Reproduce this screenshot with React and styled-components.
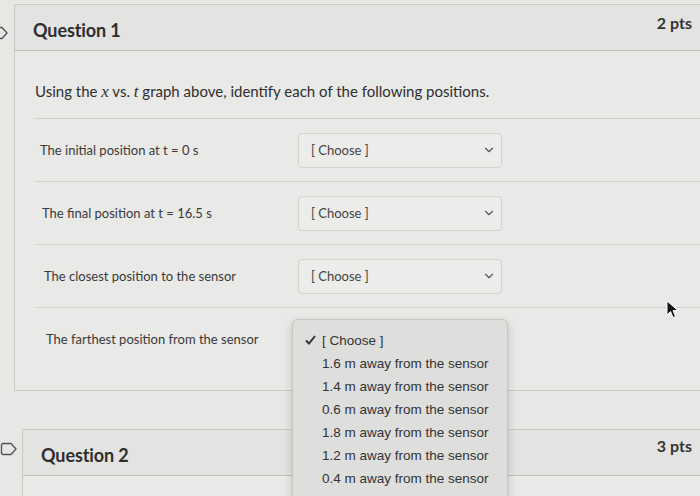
import React from "react";
import styled, { createGlobalStyle } from "styled-components";
import { ChevronDown } from "lucide-react";

const Global = createGlobalStyle`
  html, body {
    margin: 0;
    padding: 0;
    background: #e6e6e4;
  }
  body {
    font-family: Lato, "Open Sans", sans-serif;
    color: #333;
  }
`;

const Page = styled.div`
  position: relative;
  width: 700px;
  height: 496px;
  overflow: hidden;
  background: #e7e7e5;
  padding-top: 4px;
  box-sizing: border-box;
`;

const Card = styled.div`
  position: relative;
  margin-left: ${(p) => p.left}px;
  margin-right: -12px;
  margin-top: ${(p) => p.gap || 0}px;
  border: 1px solid #c9c9c6;
  background: #e9e9e7;
`;

const Header = styled.div`
  display: flex;
  justify-content: space-between;
  align-items: center;
  height: 45px;
  padding: 0 19px 0 18px;
  background: #e3e3e1;
  border-bottom: 1px solid #bfbfbc;
`;

const Title = styled.h2`
  margin: 0;
  padding-top: 5px;
  font-size: 18px;
  font-weight: 700;
  color: #2e2e2e;
  letter-spacing: -0.1px;
`;

const Pts = styled.span`
  align-self: flex-start;
  padding-top: ${(p) => p.top}px;
  font-size: 16px;
  font-weight: 700;
  color: #333;
`;

const Marker = styled.svg`
  position: absolute;
  left: ${(p) => p.left}px;
  top: ${(p) => p.top}px;
`;

const Body = styled.div`
  padding: 30px 0 0 20px;
`;

const Intro = styled.p`
  margin: 0;
  font-size: 15px;
  line-height: 20px;
  padding-bottom: 16px;
  border-bottom: 1px solid #cfcfcc;
  color: #2f2f2f;
`;

const Math = styled.i`
  font-family: "Liberation Serif", serif;
  font-size: 17px;
`;

const Row = styled.div`
  position: relative;
  display: flex;
  align-items: center;
  height: 62px;
  padding-left: ${(p) => p.indent}px;
  padding-bottom: ${(p) => (p.last ? 20 : 0)}px;
  border-bottom: ${(p) => (p.last ? "none" : "1px solid #d0d0cd")};
`;

const Label = styled.span`
  width: ${(p) => 263 - p.indent}px;
  font-size: 13px;
  color: #3a3a3a;
`;

const Select = styled.div`
  display: flex;
  align-items: center;
  justify-content: space-between;
  width: 204px;
  height: 35px;
  box-sizing: border-box;
  padding: 0 5px 0 12px;
  border: 1px solid #d2d2cf;
  border-radius: 4px;
  background: #ececea;
  font-size: 13px;
  color: #444;
  visibility: ${(p) => (p.covered ? "hidden" : "visible")};
  svg {
    color: #555;
  }
`;

const Menu = styled.ul`
  position: absolute;
  z-index: 5;
  left: 257px;
  top: 11px;
  width: 216px;
  height: 200px;
  margin: 0;
  padding: 9px 0 0;
  list-style: none;
  box-sizing: border-box;
  background: #dededc;
  border: 1px solid #c6c6c3;
  border-radius: 6px;
  box-shadow: 0 3px 10px rgba(0, 0, 0, 0.18);
  font-family: "Liberation Sans", Arial, sans-serif;
  font-size: 13.5px;
  color: #333;
`;

const Item = styled.li`
  display: flex;
  align-items: center;
  height: 23px;
  padding-left: 29px;
  position: relative;
  svg {
    position: absolute;
    left: 12px;
    top: 6px;
  }
`;

const Cursor = styled.svg`
  position: absolute;
  left: 666px;
  top: 300px;
  z-index: 10;
`;

const rows = [
  { label: "The initial position at t = 0 s", indent: 5 },
  { label: "The final position at t = 16.5 s", indent: 7 },
  { label: "The closest position to the sensor", indent: 9 },
  { label: "The farthest position from the sensor", indent: 11 },
];

const options = [
  "1.6 m away from the sensor",
  "1.4 m away from the sensor",
  "0.6 m away from the sensor",
  "1.8 m away from the sensor",
  "1.2 m away from the sensor",
  "0.4 m away from the sensor",
];

function TagMarker({ left, top }) {
  return (
    <Marker left={left} top={top} width="18" height="14" viewBox="0 0 18 14">
      <path
        d="M3 1.5 H11 L16 7 L11 12.5 H3 A1.5 1.5 0 0 1 1.5 11 V3 A1.5 1.5 0 0 1 3 1.5 Z"
        fill="none"
        stroke="#555"
        strokeWidth="1.4"
        strokeLinejoin="round"
      />
    </Marker>
  );
}

export default function App() {
  return (
    <Page>
      <Global />
      <Card left={14}>
        <TagMarker left={-24} top={21} />
        <Header>
          <Title>Question 1</Title>
          <Pts top={8}>2 pts</Pts>
        </Header>
        <Body>
          <Intro>
            Using the <Math>x</Math> vs. <Math>t</Math> graph above, identify
            each of the following positions.
          </Intro>
          {rows.map((r, i) => {
            const last = i === rows.length - 1;
            return (
              <Row key={r.label} indent={r.indent} last={last}>
                <Label indent={r.indent}>{r.label}</Label>
                <Select covered={last}>
                  <span>[ Choose ]</span>
                  <ChevronDown size={14} strokeWidth={2} />
                </Select>
                {last && (
                  <Menu>
                    <Item>
                      <svg width="11" height="10" viewBox="0 0 11 10">
                        <path
                          d="M1 5.5 L4 8.5 L10 1"
                          fill="none"
                          stroke="#333"
                          strokeWidth="2"
                        />
                      </svg>
                      [ Choose ]
                    </Item>
                    {options.map((o) => (
                      <Item key={o}>{o}</Item>
                    ))}
                  </Menu>
                )}
              </Row>
            );
          })}
        </Body>
      </Card>
      <Card left={22} gap={38}>
        <TagMarker left={-23} top={12} />
        <Header>
          <Title>Question 2</Title>
          <Pts top={6}>3 pts</Pts>
        </Header>
        <Body style={{ height: 40 }} />
      </Card>
      <Cursor width="13" height="19" viewBox="0 0 13 19">
        <path
          d="M1 1 L1 15 L4.5 11.5 L7 17.5 L9.5 16.5 L7 10.5 L12 10.5 Z"
          fill="#111"
          stroke="#fff"
          strokeWidth="1"
          strokeLinejoin="round"
        />
      </Cursor>
    </Page>
  );
}
